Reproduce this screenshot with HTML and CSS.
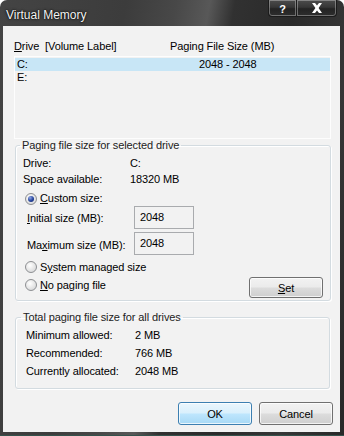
FILE: index.html
```html
<!DOCTYPE html>
<html>
<head>
<meta charset="utf-8">
<link rel="stylesheet" href="styles.css">
</head>
<body>
<div class="window">
  <div class="titlebar">
    <span class="title">Virtual Memory</span>
    <div class="caption-btns">
      <div class="cbtn help">?</div>
      <div class="cbtn close">
        <svg width="12" height="10" viewBox="0 0 12 10"><path d="M1 0h3l2 2.6L8 0h3L7.6 5 11 10H8L6 7.4 4 10H1l3.4-5z" fill="#fff"/></svg>
      </div>
    </div>
  </div>
  <div class="client">
    <div class="list-header"><span class="col-drive"><u>D</u>rive&nbsp; [Volume Label]</span><span class="col-size">Paging File Size (MB)</span></div>
    <div class="listbox">
      <div class="row sel"><span class="c1">C:</span><span class="c2">2048 - 2048</span></div>
      <div class="row"><span class="c1">E:</span></div>
    </div>

    <fieldset class="group g1">
      <legend>Paging file size for selected drive</legend>
      <div class="info"><span class="k">Drive:</span><span>C:</span></div>
      <div class="info"><span class="k">Space available:</span><span>18320 MB</span></div>
      <div class="radio-row r-custom"><span class="radio checked"></span><span><u>C</u>ustom size:</span></div>
      <div class="field-row r-initial"><span class="flabel"><u>I</u>nitial size (MB):</span><span class="textbox">2048</span></div>
      <div class="field-row r-max"><span class="flabel">Ma<u>x</u>imum size (MB):</span><span class="textbox">2048</span></div>
      <div class="radio-row r-system"><span class="radio"></span><span>S<u>y</u>stem managed size</span></div>
      <div class="last-row">
        <div class="radio-row"><span class="radio"></span><span><u>N</u>o paging file</span></div>
        <div class="btn set"><u>S</u>et</div>
      </div>
    </fieldset>

    <fieldset class="group g2">
      <legend>Total paging file size for all drives</legend>
      <div class="trow"><span class="tk">Minimum allowed:</span><span>2 MB</span></div>
      <div class="trow"><span class="tk">Recommended:</span><span>766 MB</span></div>
      <div class="trow"><span class="tk">Currently allocated:</span><span>2048 MB</span></div>
    </fieldset>

    <div class="buttons">
      <div class="btn ok">OK</div>
      <div class="btn cancel">Cancel</div>
    </div>
  </div>
</div>
</body>
</html>
```

FILE: styles.css
```css
* { box-sizing: border-box; }
html, body {
  margin: 0;
  padding: 0;
  background: #ffffff;
}
body {
  width: 344px;
  height: 436px;
  font-family: "Liberation Sans", Arial, sans-serif;
  font-size: 11px;
  letter-spacing: -0.1px;
  color: #000;
}
u { text-decoration: underline; text-underline-offset: 1px; }

.window {
  width: 344px;
  height: 436px;
  display: flex;
  flex-direction: column;
  border-radius: 7px 7px 0 0;
  padding: 0 4px 3px 3px;
  border-bottom: 1px solid #35524c;
  overflow: hidden;
  background:
    linear-gradient(100deg, #444 0%, #3c3c3c 30%, #484848 42%, #585858 50%, #313131 56%, #2a2a2a 70%, #363636 85%, #282828 100%);
}

.titlebar {
  height: 26px;
  flex: none;
  display: flex;
  justify-content: space-between;
  align-items: flex-start;
  margin: 0 -4px 0 -3px;
  padding: 0 7px 0 6px;
}
.title {
  font-size: 12px;
  letter-spacing: 0;
  line-height: 14px;
  margin-top: 8px;
  color: #f4f4f4;
  text-shadow: 0 0 1px #000, 0 0 3px #000;
}
.caption-btns {
  display: flex;
}
.cbtn {
  height: 17px;
  display: flex;
  align-items: center;
  justify-content: center;
  border: 1px solid #1b1b1b;
  border-top: none;
  box-shadow: inset 0 0 0 1px rgba(255,255,255,0.32);
  background: linear-gradient(#4c4c4c 0%, #363636 45%, #232323 55%, #2e2e2e 100%);
}
.help {
  width: 28px;
  border-radius: 0 0 0 4px;
  color: #fff;
  font-weight: bold;
  font-size: 11px;
  padding-top: 1px;
  border-right: none;
}
.close {
  width: 41px;
  border-radius: 0 0 4px 0;
}

.client {
  flex: 1;
  background: #f2f2f2;
  padding: 13px 7px 0 0;
}

.list-header {
  display: flex;
  line-height: 14px;
  margin-left: 11px;
  height: 14px;
}
.col-drive { width: 156px; white-space: pre; }

.listbox {
  margin: 3px 0 0 11px;
  width: 317px;
  height: 83px;
  border: 1px solid #fdfdfd;
  padding: 1px 0 0 0;
}
.row {
  height: 13px;
  line-height: 13px;
  display: flex;
  padding-left: 2px;
}
.row.sel { background: #c8e6f6; }
.c1 { width: 182px; }

.group {
  border: 1px solid #d3dbe0;
  border-radius: 3px;
  box-shadow: inset 1px 1px 0 #fff, 1px 1px 0 #fff;
  margin: 0 0 0 12px;
  min-width: 0;
}
.group legend {
  line-height: 12px;
  padding: 0 2px;
  color: #222;
}
.g1 {
  width: 316px;
  padding: 4px 7px 2px 7px;
}
.g1 legend { margin-left: -3px; }
.g2 {
  width: 315px;
  padding: 3px 7px 8px 10px;
  margin-top: 10px;
}
.g2 legend { margin-left: -5px; }

.info {
  display: flex;
  line-height: 16px;
  height: 16px;
}
.k { width: 107px; }

.radio-row {
  display: flex;
  align-items: center;
  line-height: 15px;
  height: 15px;
  margin-left: 2px;
  gap: 3px;
}
.radio {
  width: 12px;
  height: 12px;
  border-radius: 50%;
  border: 1px solid #8d8f92;
  background: radial-gradient(circle at 40% 35%, #ffffff 0%, #e9e9e9 45%, #cfd1d3 100%);
  display: flex;
  align-items: center;
  justify-content: center;
  flex: none;
}
.radio.checked::after {
  content: "";
  width: 6px;
  height: 6px;
  border-radius: 50%;
  background: radial-gradient(circle at 35% 30%, #8fa6e6 0%, #24429a 55%, #142a6a 100%);
}
.r-custom { margin-top: 4px; }
.r-system { margin-top: 4px; height: 16px; line-height: 16px; }

.field-row {
  display: flex;
  align-items: flex-start;
  height: 23px;
}
.r-max { margin-top: 3px; }
.flabel {
  width: 107px;
  margin-left: 4px;
  line-height: 14px;
  padding-top: 5px;
}
.r-max .flabel { padding-top: 6px; }
.textbox {
  width: 60px;
  height: 23px;
  border: 1px solid #a9abae;
  padding: 3px 0 0 5px;
  line-height: 14px;
}

.last-row {
  display: flex;
  justify-content: space-between;
  align-items: flex-start;
  margin-top: 2px;
  height: 21px;
}
.last-row .radio-row { height: 16px; line-height: 16px; }

.btn {
  display: flex;
  align-items: center;
  justify-content: center;
  border: 1px solid #707070;
  border-radius: 3px;
  box-shadow: inset 0 0 0 1px rgba(255,255,255,0.75);
  background: linear-gradient(#f2f2f2 0%, #ebebeb 48%, #dcdcdc 52%, #cfcfcf 100%);
  color: #000;
}
.set {
  width: 74px;
  height: 21px;
}

.trow {
  display: flex;
  height: 18px;
  line-height: 18px;
}
.tk { width: 109px; }

.buttons {
  display: flex;
  justify-content: flex-end;
  gap: 7px;
  margin-top: 13px;
}
.ok, .cancel {
  width: 74px;
  height: 23px;
}
.ok {
  border-color: #3c7fb1;
  background: linear-gradient(#eaf6fd 0%, #d9f0fc 48%, #bee6fd 52%, #a7d9f5 100%);
}
```
